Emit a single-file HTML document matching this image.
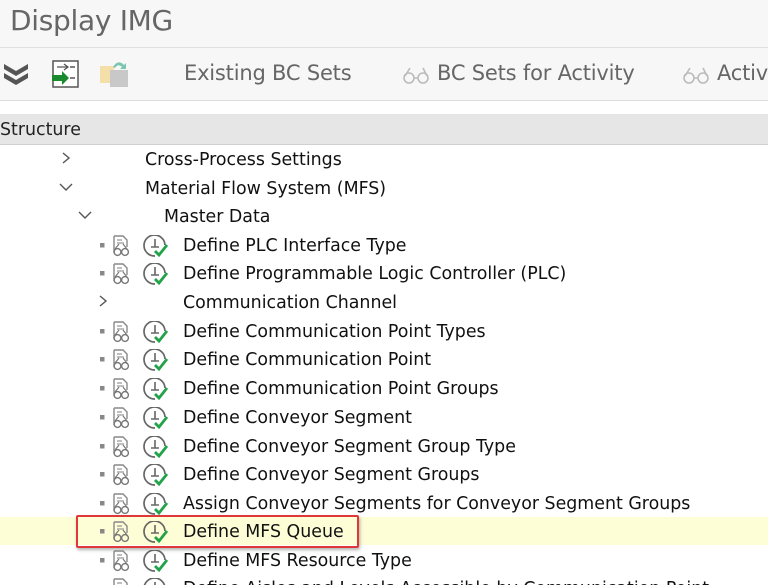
<!DOCTYPE html>
<html><head><meta charset="utf-8"><style>
html,body{margin:0;width:768px;height:585px;overflow:hidden}
body{background:#fff;font-family:"DejaVu Sans","Liberation Sans",sans-serif;position:relative}
.a{position:absolute}
.t{position:absolute;font-size:17.4px;color:#111;white-space:nowrap;line-height:20px;letter-spacing:0}
.tb{font-size:21px;color:#666;white-space:nowrap;position:absolute;letter-spacing:-0.2px}
</style></head><body>
<div class="a" style="left:0;top:0;width:768px;height:47px;background:#f7f7f7;border-bottom:1px solid #e0e0e0"></div>
<div class="a" style="left:10px;top:4px;font-size:28px;color:#666;letter-spacing:-0.3px">Display IMG</div>
<div class="a" style="left:0;top:48px;width:768px;height:52px;background:#f7f7f7;border-bottom:1px solid #dcdcdc"></div>
<svg class="a" style="left:0;top:58px" width="140" height="36">
<path d="M4 6 L16 13 L28 6 L28 11 L16 18 L4 11Z M4 15 L16 22 L28 15 L28 20 L16 27 L4 20Z" fill="#555"/>
<rect x="53" y="3" width="25" height="26" fill="#fff" stroke="#555" stroke-width="1.5"/>
<path d="M57 9 H68 M64 6 L68 9 L64 12" stroke="#555" fill="none" stroke-width="1.3"/>
<path d="M70 9 H75 M70 20 H75" stroke="#555" stroke-width="1.5"/>
<path d="M52 17 H62 V13 L69 20 L62 27 V23 H52Z" fill="#1a8a2e"/>
<rect x="100" y="8" width="14" height="17" fill="#f5dfa8"/>
<rect x="110" y="12" width="18" height="17" fill="#c8c8c8"/>
<path d="M113 9 Q118 1 124 7 L126 5 L126 11 L120 11 L122 9 Q118 5 115 10Z" fill="#7cc5b0"/>
</svg>
<div class="tb" style="left:184px;top:61px">Existing BC Sets</div>
<svg class="a" style="left:402px;top:66px" width="30" height="18"><g fill="none" stroke="#bbb" stroke-width="1.6"><circle cx="7" cy="12" r="5"/><circle cx="21" cy="12" r="5"/><path d="M12 12 H16 M3 10 L8 2 M25 10 L21 2"/></g></svg>
<div class="tb" style="left:437px;top:61px">BC Sets for Activity</div>
<svg class="a" style="left:682px;top:66px" width="30" height="18"><g fill="none" stroke="#bbb" stroke-width="1.6"><circle cx="7" cy="12" r="5"/><circle cx="21" cy="12" r="5"/><path d="M12 12 H16 M3 10 L8 2 M25 10 L21 2"/></g></svg>
<div class="tb" style="left:717px;top:61px">Activ</div>
<div class="a" style="left:0;top:114px;width:768px;height:30px;background:#e6e6e6;border-bottom:1px solid #d0d0d0"></div>
<div class="t" style="left:0;top:120px;color:#222">Structure</div>
<div class="a" style="left:0;top:517px;width:768px;height:28px;background:#fdfdd6"></div>
<div class="a" style="left:76px;top:515px;width:279px;height:29px;border:2px solid #e0373b;border-radius:2px;box-shadow:1px 2px 3px rgba(0,0,0,.3)"></div>
<svg width="0" height="0" style="position:absolute"><defs>
<g id="ic">
<rect x="2" y="8" width="4.5" height="4.5" fill="#888"/>
<path d="M16 1 H25 L29 5 V12 M16 1 V18" fill="none" stroke="#888" stroke-width="1.4"/>
<path d="M19 5 H24 M19 8 H26" stroke="#999" stroke-width="1.2"/>
<circle cx="19.5" cy="17" r="3.4" fill="none" stroke="#777" stroke-width="1.4"/><circle cx="27" cy="17" r="3.4" fill="none" stroke="#777" stroke-width="1.4"/>
<path d="M17 14 L21 9 M29 14 L25 9" stroke="#777" stroke-width="1.2" fill="none"/>
<path d="M67 10 A10.5 10.5 0 1 0 57 21" fill="none" stroke="#666" stroke-width="1.7"/>
<path d="M57 4 V12 M53 12 H61" stroke="#666" stroke-width="1.6"/>
<path d="M57 16 L61 20 L69 10" fill="none" stroke="#22a34a" stroke-width="2.8"/>
</g></defs></svg>
<svg class="a" style="left:60px;top:151px" width="12" height="14"><path d="M3 2 L9 7 L3 12" fill="none" stroke="#555" stroke-width="1.4"/></svg>
<div class="t" style="left:145px;top:150px">Cross-Process Settings</div>
<svg class="a" style="left:58px;top:182px" width="16" height="10"><path d="M2 2 L8 8 L14 2" fill="none" stroke="#555" stroke-width="1.4"/></svg>
<div class="t" style="left:145px;top:179px">Material Flow System (MFS)</div>
<svg class="a" style="left:77px;top:210px" width="16" height="10"><path d="M2 2 L8 8 L14 2" fill="none" stroke="#555" stroke-width="1.4"/></svg>
<div class="t" style="left:164px;top:207px">Master Data</div>
<svg class="a" style="left:97px;top:294px" width="12" height="14"><path d="M3 2 L9 7 L3 12" fill="none" stroke="#555" stroke-width="1.4"/></svg>
<div class="t" style="left:183px;top:293px">Communication Channel</div>
<svg class="a" style="left:98px;top:235px" width="80" height="24"><use href="#ic"/></svg><div class="t" style="left:183px;top:236px">Define PLC Interface Type</div>
<svg class="a" style="left:98px;top:263px" width="80" height="24"><use href="#ic"/></svg><div class="t" style="left:183px;top:264px">Define Programmable Logic Controller (PLC)</div>
<svg class="a" style="left:98px;top:321px" width="80" height="24"><use href="#ic"/></svg><div class="t" style="left:183px;top:322px">Define Communication Point Types</div>
<svg class="a" style="left:98px;top:349px" width="80" height="24"><use href="#ic"/></svg><div class="t" style="left:183px;top:350px">Define Communication Point</div>
<svg class="a" style="left:98px;top:378px" width="80" height="24"><use href="#ic"/></svg><div class="t" style="left:183px;top:379px">Define Communication Point Groups</div>
<svg class="a" style="left:98px;top:407px" width="80" height="24"><use href="#ic"/></svg><div class="t" style="left:183px;top:408px">Define Conveyor Segment</div>
<svg class="a" style="left:98px;top:436px" width="80" height="24"><use href="#ic"/></svg><div class="t" style="left:183px;top:437px">Define Conveyor Segment Group Type</div>
<svg class="a" style="left:98px;top:464px" width="80" height="24"><use href="#ic"/></svg><div class="t" style="left:183px;top:465px">Define Conveyor Segment Groups</div>
<svg class="a" style="left:98px;top:493px" width="80" height="24"><use href="#ic"/></svg><div class="t" style="left:183px;top:494px">Assign Conveyor Segments for Conveyor Segment Groups</div>
<svg class="a" style="left:98px;top:521px" width="80" height="24"><use href="#ic"/></svg><div class="t" style="left:183px;top:522px">Define MFS Queue</div>
<svg class="a" style="left:98px;top:550px" width="80" height="24"><use href="#ic"/></svg><div class="t" style="left:183px;top:551px">Define MFS Resource Type</div>
<svg class="a" style="left:98px;top:578px" width="80" height="24"><use href="#ic"/></svg><div class="t" style="left:183px;top:579px">Define Aisles and Levels Accessible by Communication Point</div>
</body></html>
